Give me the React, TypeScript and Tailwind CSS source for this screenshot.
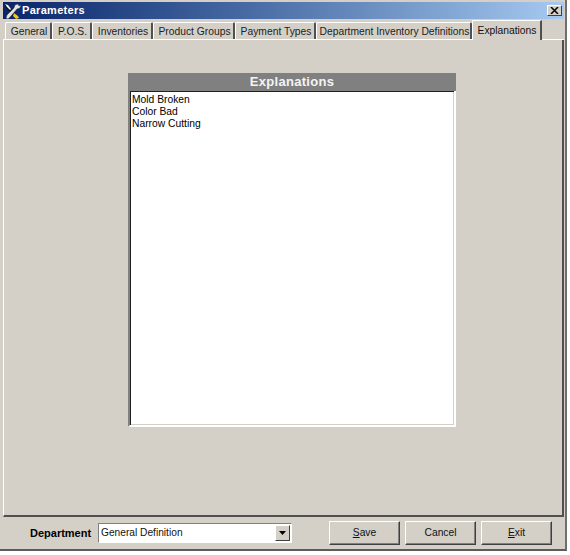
const font = "font-['Liberation_Sans',Arial,sans-serif]";

const tabs = [
  { label: "General", w: "w-[47px]" },
  { label: "P.O.S.", w: "w-[40px]" },
  { label: "Inventories", w: "w-[61px]" },
  { label: "Product Groups", w: "w-[82px]" },
  { label: "Payment Types", w: "w-[81px]" },
  { label: "Department Inventory Definitions", w: "w-[156px]" },
];

function ToolsIcon() {
  return (
    <svg width="17" height="16" viewBox="0 0 17 16" className="shrink-0">
      <path d="M1 1l3 1 3 4 2 2 5 5 1 2-3 1-2-2-4-5-3-3-2-3z" fill="#111" />
      <path d="M1 1l3 1 3 4-1 1-3-3z" fill="#f4f4f4" />
      <path d="M10 10l4 3 1 2-3 1-3-3z" fill="#e8c820" />
      <path d="M14 1l-3 1-1 3-7 7-1 3 2 1 3-3 6-7 3-1 1-3-2 1z" fill="#e4e4e4" stroke="#222" strokeWidth="0.4" />
    </svg>
  );
}

function Button({ children }: { children: React.ReactNode }) {
  return (
    <div className="w-[71px] h-[24px] flex items-center justify-center bg-[#d4d0c8] border border-t-white border-l-white border-r-[#404040] border-b-[#404040] shadow-[inset_-1px_-1px_0_#808080] text-[10.3px] text-[#111]">
      {children}
    </div>
  );
}

export default function App() {
  return (
    <div className={`${font} w-[570px] h-[555px] bg-white overflow-hidden`}>
      <div className="w-[567px] h-[551px] bg-[#d4d0c8] flex flex-col pt-[2px] border-r-2 border-b-2 border-r-[#6e6e6e] border-b-[#5c5c5c]">
        <div className="ml-[3px] mr-px h-[17px] shrink-0 flex items-center justify-between pl-px pr-[2px] bg-gradient-to-r from-[#0a246a] to-[#a6caf0]">
          <div className="flex items-center gap-px">
            <ToolsIcon />
            <span className="text-[11px] font-bold text-white tracking-[0.3px]">Parameters</span>
          </div>
          <div className="w-[15px] h-[11px] flex items-center justify-center bg-[#d4d0c8] border border-t-white border-l-white border-r-[#404040] border-b-[#404040]">
            <svg width="9" height="7" viewBox="0 0 9 7">
              <path d="M1 0l7 7M8 0L1 7" stroke="#000" strokeWidth="1.5" fill="none" />
            </svg>
          </div>
        </div>
        <div className="flex items-end h-[21px] shrink-0 ml-[3px] mr-px pl-[2px] border-b border-white">
          {tabs.map((t) => (
            <div
              key={t.label}
              className={`${t.w} h-[17px] shrink-0 flex items-center justify-center pt-[2px] pl-[2px] bg-[#d4d0c8] border-l border-t border-white border-r-2 border-r-[#505050] text-[10.3px] text-[#222] whitespace-nowrap rounded-t-[2px]`}
            >
              {t.label}
            </div>
          ))}
          <div className="w-[70px] h-[20px] -mb-px shrink-0 flex items-start pt-[2px] pl-[1px] justify-center bg-[#d4d0c8] border-l border-t border-white border-r-2 border-r-[#505050] text-[10.3px] text-[#111] whitespace-nowrap">
            Explanations
          </div>
        </div>
        <div className="flex-1 min-h-0 flex items-start ml-[3px] mr-px border-l border-l-white border-r-2 border-r-[#505050] border-b-2 border-b-[#505050]">
          <div className="mt-[33px] ml-[124px] w-[328px] h-[354px] flex flex-col border-2 border-t-0 border-r-white border-b-white border-l-[#808080]">
            <div className="h-[18px] shrink-0 -mx-[2px] bg-[#808080] flex items-center justify-center text-[13px] font-bold text-[#f4f4f4] tracking-[0.3px]">
              Explanations
            </div>
            <div className="flex-1 bg-white border-t border-l border-[#202020] shadow-[inset_-1px_-1px_0_#d4d0c8] pl-[1px] pt-[2px] text-[10.3px] leading-[12px] text-black">
              <div>Mold Broken</div>
              <div>Color Bad</div>
              <div>Narrow Cutting</div>
            </div>
          </div>
        </div>
        <div className="h-[32px] shrink-0 flex items-center pl-[30px]">
          <span className="text-[11px] font-bold text-black w-[68px]">Department</span>
          <div className="w-[194px] h-[20px] flex items-center justify-between bg-white border border-t-[#808080] border-l-[#808080] border-b-white border-r-white pl-[2px] text-[10.2px] text-[#111]">
            General Definition
            <div className="w-[15px] h-[16px] flex items-center justify-center bg-[#d4d0c8] border border-t-white border-l-white border-r-[#404040] border-b-[#404040] mr-px">
              <svg width="7" height="4" viewBox="0 0 7 4"><path d="M0 0h7L3.5 4z" fill="#000" /></svg>
            </div>
          </div>
          <div className="ml-[37px] flex gap-[5px]">
            <Button><span className="underline">S</span>ave</Button>
            <Button>Cancel</Button>
            <Button><span className="underline">E</span>xit</Button>
          </div>
        </div>
      </div>
    </div>
  );
}
